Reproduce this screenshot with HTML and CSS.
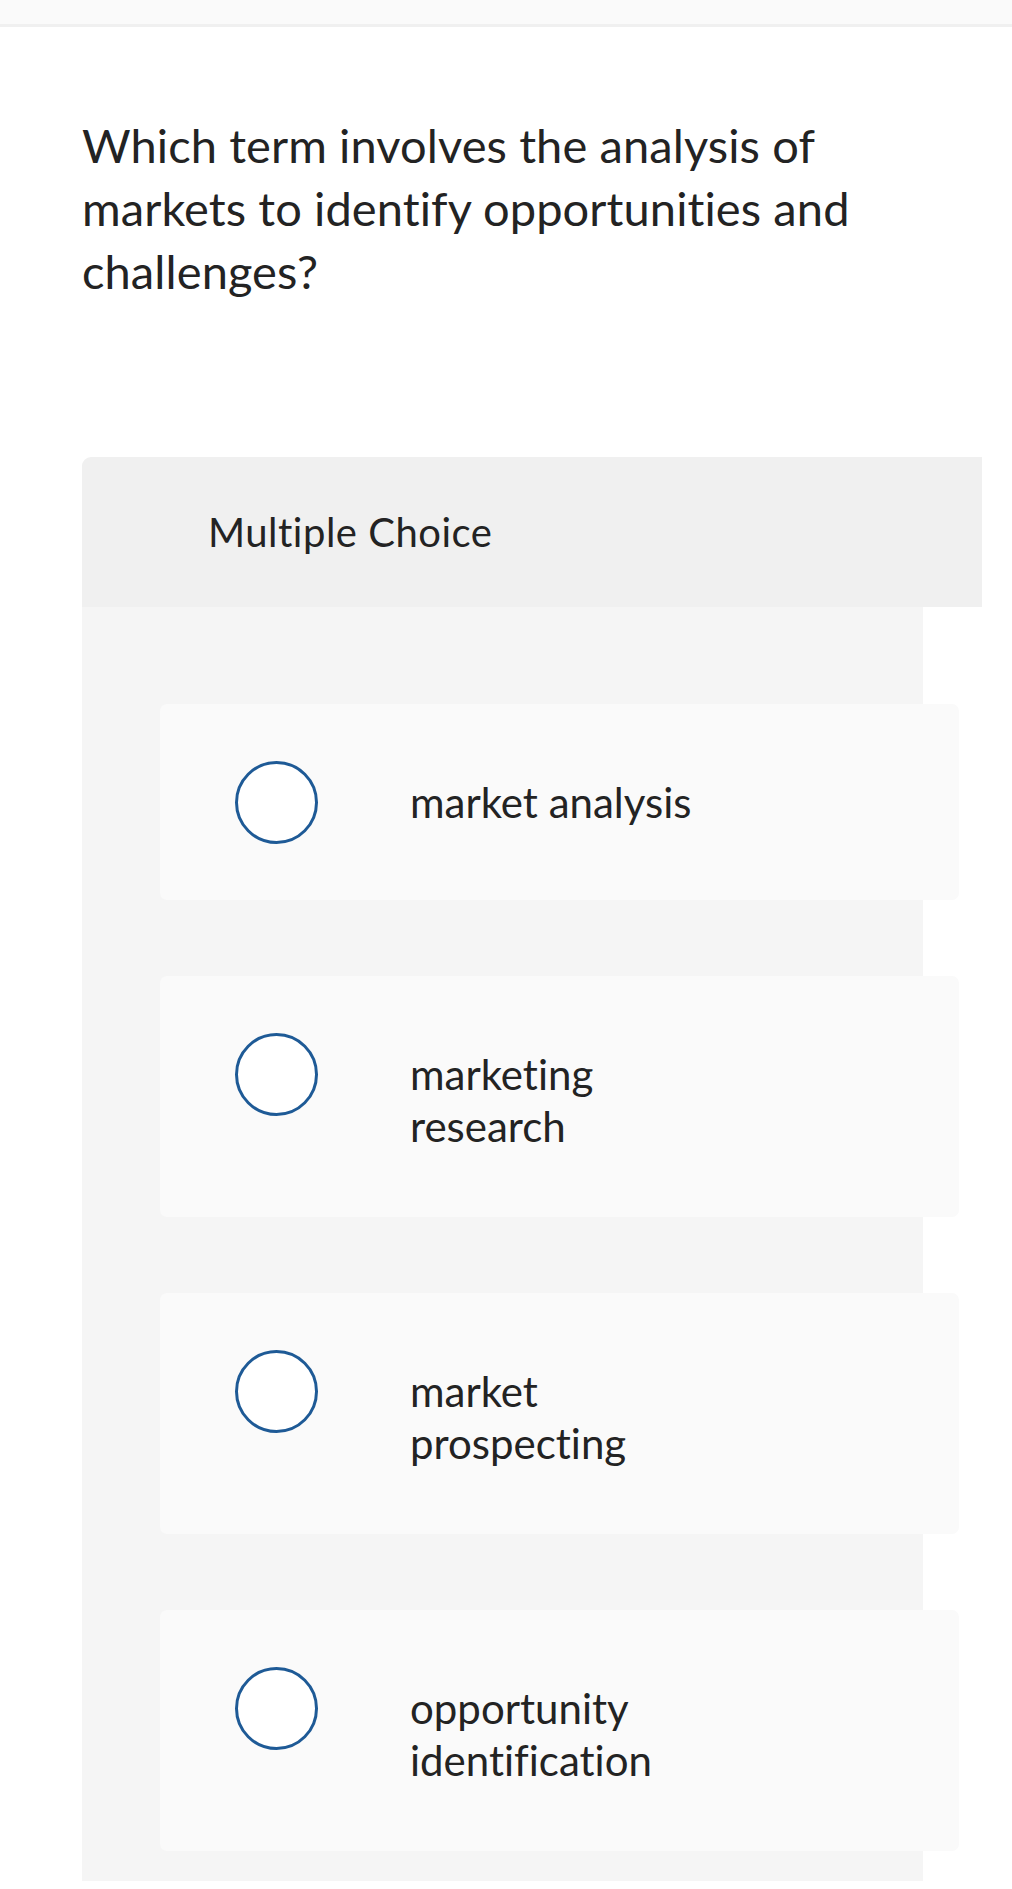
FILE: index.html
```html
<!DOCTYPE html>
<html lang="en">
<head>
<meta charset="utf-8">
<title>Multiple Choice</title>
<link rel="stylesheet" href="styles.css">
</head>
<body>
<div class="topbar"></div>
<main class="page">
  <h1 class="question">Which term involves the analysis of markets to identify opportunities and challenges?</h1>
  <section class="mc">
    <div class="mc-head">Multiple Choice</div>
    <div class="mc-body">
      <label class="option"><span class="radio"></span><span class="opt-text">market analysis</span></label>
      <label class="option"><span class="radio"></span><span class="opt-text">marketing research</span></label>
      <label class="option"><span class="radio"></span><span class="opt-text">market prospecting</span></label>
      <label class="option"><span class="radio"></span><span class="opt-text">opportunity identification</span></label>
    </div>
  </section>
</main>
</body>
</html>
```
FILE: styles.css
```css
html, body {
  margin: 0;
  padding: 0;
  background: #ffffff;
}
body {
  font-family: Lato, "Liberation Sans", sans-serif;
  color: #232323;
  font-variant-ligatures: none;
  font-feature-settings: "liga" 0, "clig" 0;
}
.topbar {
  height: 24px;
  background: #fafafa;
  border-bottom: 3px solid #f0f0f0;
}
.page {
  padding-left: 82px;
}
.question {
  margin: 87px 0 0 0;
  width: 810px;
  font-size: 47px;
  line-height: 63px;
  font-weight: 400;
  letter-spacing: 0.1px;
}
.mc {
  margin-top: 154px;
}
.mc-head {
  width: 774px;
  height: 150px;
  padding-left: 126px;
  line-height: 150px;
  font-size: 40px;
  letter-spacing: 0.5px;
  background: #f0f0f0;
  border-top-left-radius: 9px;
}
.mc-body {
  width: 763px;
  padding: 97px 0 30px 78px;
  background: #f5f5f5;
  display: flex;
  flex-direction: column;
  gap: 76px;
}
.option {
  width: 724px;
  padding: 57px 0 56px 75px;
  background: #fafafa;
  border-radius: 7px;
  display: flex;
  align-items: flex-start;
}
.radio {
  flex: none;
  width: 77px;
  height: 77px;
  border: 3px solid #1e5a96;
  border-radius: 50%;
  background: #ffffff;
}
.opt-text {
  width: 300px;
  margin: 15px 0 0 92px;
  padding-bottom: 9px;
  font-size: 42px;
  line-height: 52px;
}
```
